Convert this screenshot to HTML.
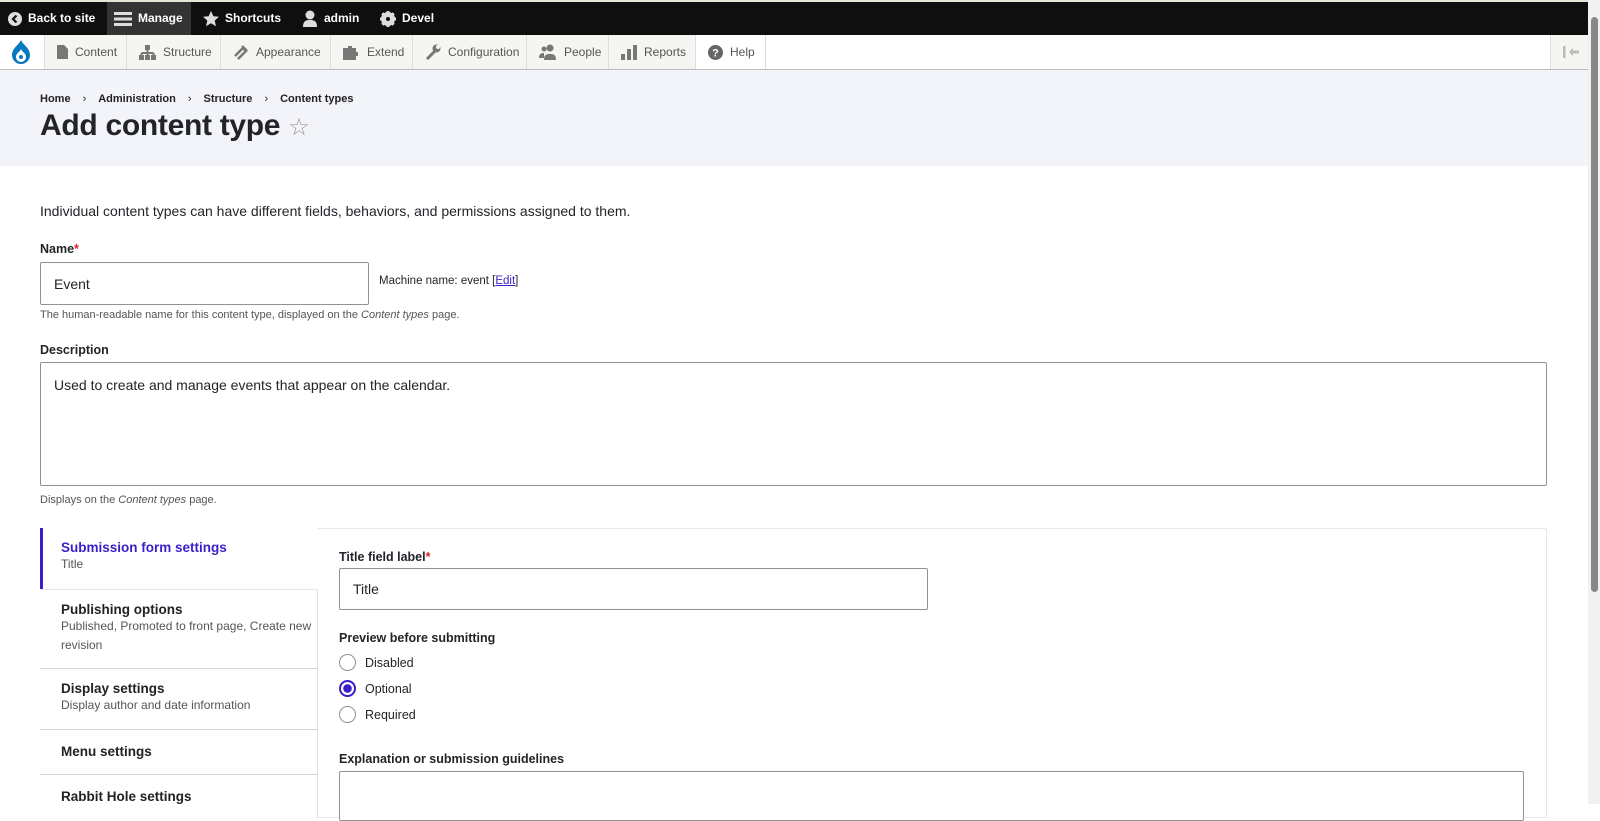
<!DOCTYPE html>
<html><head><meta charset="utf-8"><style>
*{box-sizing:border-box;margin:0;padding:0}
body{width:1600px;height:804px;overflow:hidden;background:#fff;font-family:"Liberation Sans","DejaVu Sans",sans-serif;color:#232429;position:relative}
.topline{position:absolute;left:0;top:0;width:1588px;height:2px;background:#e8e4d8}
.bar{position:absolute;left:0;top:2px;width:1588px;height:33px;background:#0f0f0f;color:#fff;font-size:12px;font-weight:bold}
.bar .it{position:absolute;top:0;height:33px;line-height:33px;display:flex;align-items:center;gap:6px}
.tray{position:absolute;left:0;top:35px;width:1588px;height:35px;background:#fff;border-bottom:1px solid #bbb;box-shadow:0 2px 2px rgba(0,0,0,.2);font-size:12px;color:#555}
.tray .t{position:absolute;top:0;height:34px;background:#f5f5f2;border-right:1px solid #ddd;display:flex;align-items:center;gap:7px;padding-left:12px}
.hdr{position:absolute;left:0;top:70px;width:1588px;height:96px;background:#f3f4f9}
.bc{position:absolute;left:40px;top:93px;font-size:11px;font-weight:bold;color:#222}
.bc span{margin:0 12px;font-weight:normal}
h1{position:absolute;left:40px;top:109px;font-size:30px;font-weight:bold;letter-spacing:-.3px}
h1 .star{font-weight:normal;color:#999;font-size:24px;margin-left:8px}
.txt{position:absolute;font-size:14px}
.lbl{position:absolute;font-size:12.5px;font-weight:bold}
.req{color:#d72222}
.help{position:absolute;font-size:11px;color:#555}
.inp{position:absolute;border:1px solid #919297;border-radius:2px;background:#fff;font-size:14px;padding-left:13px;display:flex;align-items:center}
.vt{position:absolute;left:40px;top:528px;width:1507px;height:290px;border:1px solid #e6e7ee;border-radius:2px;background:#fff}
.vl{position:absolute;left:40px;top:528px;width:278px;height:290px;background:#fff;border-right:1px solid #dedfe4}
.tab{position:absolute;left:0;width:278px;border-bottom:1px solid #d4d4da;padding-left:21px}
.tab b{display:block;font-size:13.5px;color:#222}
.tab i{display:block;font-style:normal;font-size:12px;color:#555;line-height:19px}
.rad{position:absolute;left:339px;font-size:12.5px;display:flex;align-items:center;gap:9px}
.rad s{display:inline-block;width:17px;height:17px;border:1px solid #8e929c;border-radius:50%;background:#fff}
.sb{position:absolute;right:0;top:0;width:12px;height:804px;background:#f1f1f1}
.sb div{position:absolute;left:3px;top:17px;width:7px;height:575px;background:#888;border-radius:4px}
</style></head><body>
<div class="topline"></div>
<div class="bar">
 <div class="it" style="left:8px"><svg width="14" height="14" viewBox="0 0 14 14"><circle cx="7" cy="7" r="7" fill="#ddd"/><path d="M8.5 3.5 5 7l3.5 3.5" stroke="#111" stroke-width="2.2" fill="none"/></svg>Back to site</div>
 <div style="position:absolute;left:107px;top:0;width:84px;height:33px;background:#333"></div>
 <div class="it" style="left:114px"><svg width="18" height="14"><rect y="0" width="18" height="3" fill="#ddd"/><rect y="5.5" width="18" height="3" fill="#ddd"/><rect y="11" width="18" height="3" fill="#ddd"/></svg>Manage</div>
 <div class="it" style="left:203px"><svg width="16" height="16" viewBox="0 0 16 16"><path d="M8 0l2.4 5.3 5.6.5-4.3 3.8 1.3 5.6L8 12.3 3 15.2l1.3-5.6L0 5.8l5.6-.5z" fill="#ddd"/></svg>Shortcuts</div>
 <div class="it" style="left:302px"><svg width="16" height="17" viewBox="0 0 16 17"><circle cx="8" cy="5" r="4.5" fill="#ddd"/><path d="M1 17c0-6 3-7 7-7s7 1 7 7z" fill="#ddd"/></svg>admin</div>
 <div class="it" style="left:380px"><svg width="16" height="16" viewBox="0 0 16 16"><circle cx="8" cy="8" r="5.5" fill="none" stroke="#ddd" stroke-width="3"/><path d="M8 0v16M0 8h16M2.3 2.3l11.4 11.4M13.7 2.3 2.3 13.7" stroke="#ddd" stroke-width="3"/><circle cx="8" cy="8" r="2" fill="#0f0f0f"/></svg>Devel</div>
</div>
<div class="tray">
 <div class="t" style="left:0;width:45px;background:#fff;padding-left:10px"><svg width="22" height="26" viewBox="0 0 22 26"><path d="M11 1C9 6 2 9 2 16a9 9 0 0 0 18 0C20 9 13 6 11 1z" fill="#0678be"/><path d="M11 10c-1 3-5 4-5 8a5 5 0 0 0 10 0c0-4-4-5-5-8z" fill="#fff"/><circle cx="11" cy="18" r="2" fill="#0678be"/></svg></div>
 <div class="t" style="left:45px;width:82px"><svg width="11" height="14"><path d="M0 0h7l4 4v10H0z" fill="#777"/></svg>Content</div>
 <div class="t" style="left:127px;width:94px"><svg width="17" height="15"><rect x="6" y="0" width="5" height="5" fill="#777"/><path d="M8.5 5v3M2.5 8h12M2.5 8v3M8.5 8v3M14.5 8v3" stroke="#777" stroke-width="2" fill="none"/><rect x="0" y="10" width="5" height="5" fill="#777"/><rect x="6" y="10" width="5" height="5" fill="#777"/><rect x="12" y="10" width="5" height="5" fill="#777"/></svg>Structure</div>
 <div class="t" style="left:221px;width:110px"><svg width="16" height="16"><path d="M2 12l8-8 3 3-8 8M9 2l5 5" stroke="#777" stroke-width="2.5" fill="none"/></svg>Appearance</div>
 <div class="t" style="left:331px;width:82px"><svg width="17" height="15"><path d="M0 3h5V1h4v2h4v4h2v4h-2v4H0z" fill="#777"/></svg>Extend</div>
 <div class="t" style="left:413px;width:114px"><svg width="16" height="16"><path d="M2 15 10 7" stroke="#777" stroke-width="3"/><circle cx="11.5" cy="4.5" r="4" fill="#777"/><circle cx="13" cy="3" r="2" fill="#f5f5f2"/></svg>Configuration</div>
 <div class="t" style="left:527px;width:82px"><svg width="18" height="16"><circle cx="11" cy="4" r="3.5" fill="#777"/><path d="M5 16c0-5 2-6 6-6s6 1 6 6z" fill="#777"/><circle cx="5" cy="5" r="2.5" fill="#777"/><path d="M0 14c0-4 2-5 5-5v5z" fill="#777"/></svg>People</div>
 <div class="t" style="left:609px;width:87px"><svg width="16" height="15"><rect x="0" y="9" width="4" height="6" fill="#777"/><rect x="6" y="4" width="4" height="11" fill="#777"/><rect x="12" y="0" width="4" height="15" fill="#777"/></svg>Reports</div>
 <div class="t" style="left:696px;width:70px;background:#fff"><svg width="15" height="15"><circle cx="7.5" cy="7.5" r="7.5" fill="#666"/><text x="7.5" y="11.5" font-size="11" font-weight="bold" fill="#fff" text-anchor="middle" font-family="Liberation Sans">?</text></svg>Help</div>
 <div class="t" style="left:1550px;width:38px;border-left:1px solid #ddd;border-right:none"><svg width="16" height="12"><rect x="0" y="0" width="2.5" height="12" fill="#bbb"/><path d="M6 6l4-4v2.5h6v3h-6V10z" fill="#bbb"/></svg></div>
</div>
<div class="hdr"></div>
<div class="bc">Home<span>›</span>Administration<span>›</span>Structure<span>›</span>Content types</div>
<h1>Add content type<span class="star">☆</span></h1>
<div class="txt" style="left:40px;top:203px">Individual content types can have different fields, behaviors, and permissions assigned to them.</div>
<div class="lbl" style="left:40px;top:242px">Name<span class="req">*</span></div>
<div class="inp" style="left:40px;top:262px;width:329px;height:43px">Event</div>
<div style="position:absolute;left:379px;top:275px;font-size:11.5px">Machine name: event [<span style="color:#3b1ec9;text-decoration:underline">Edit</span>]</div>
<div class="help" style="left:40px;top:309px">The human-readable name for this content type, displayed on the <i>Content types</i> page.</div>
<div class="lbl" style="left:40px;top:343px">Description</div>
<div class="inp" style="left:40px;top:362px;width:1507px;height:124px;align-items:flex-start;padding-top:14px">Used to create and manage events that appear on the calendar.</div>
<div class="help" style="left:40px;top:494px">Displays on the <i>Content types</i> page.</div>
<div class="vt"></div>
<div class="vl">
 <div class="tab" style="top:0;height:61px;background:#fff;border-left:3px solid #3b1ec9;padding-left:18px;padding-top:12px;border-bottom:none"><b style="color:#3b1ec9">Submission form settings</b><i>Title</i></div>
 <div class="tab" style="top:61px;height:80px;padding-top:12px;border-top:1px solid #e6e7ee"><b>Publishing options</b><i>Published, Promoted to front page, Create new revision</i></div>
 <div class="tab" style="top:141px;height:61px;padding-top:12px"><b>Display settings</b><i>Display author and date information</i></div>
 <div class="tab" style="top:202px;height:45px;padding-top:14px"><b>Menu settings</b></div>
 <div class="tab" style="top:247px;height:45px;padding-top:14px;border-bottom:none"><b>Rabbit Hole settings</b></div>
</div>
<div class="lbl" style="left:339px;top:550px">Title field label<span class="req">*</span></div>
<div class="inp" style="left:339px;top:568px;width:589px;height:42px">Title</div>
<div class="lbl" style="left:339px;top:631px">Preview before submitting</div>
<div class="rad" style="top:654px"><s></s>Disabled</div>
<div class="rad" style="top:680px"><s style="border:2px solid #3b1ec9;background:radial-gradient(circle,#3b1ec9 4px,#fff 4.5px)"></s>Optional</div>
<div class="rad" style="top:706px"><s></s>Required</div>
<div class="lbl" style="left:339px;top:752px">Explanation or submission guidelines</div>
<div class="inp" style="left:339px;top:771px;width:1185px;height:50px"></div>
<div class="sb"><div></div></div>
</body></html>
